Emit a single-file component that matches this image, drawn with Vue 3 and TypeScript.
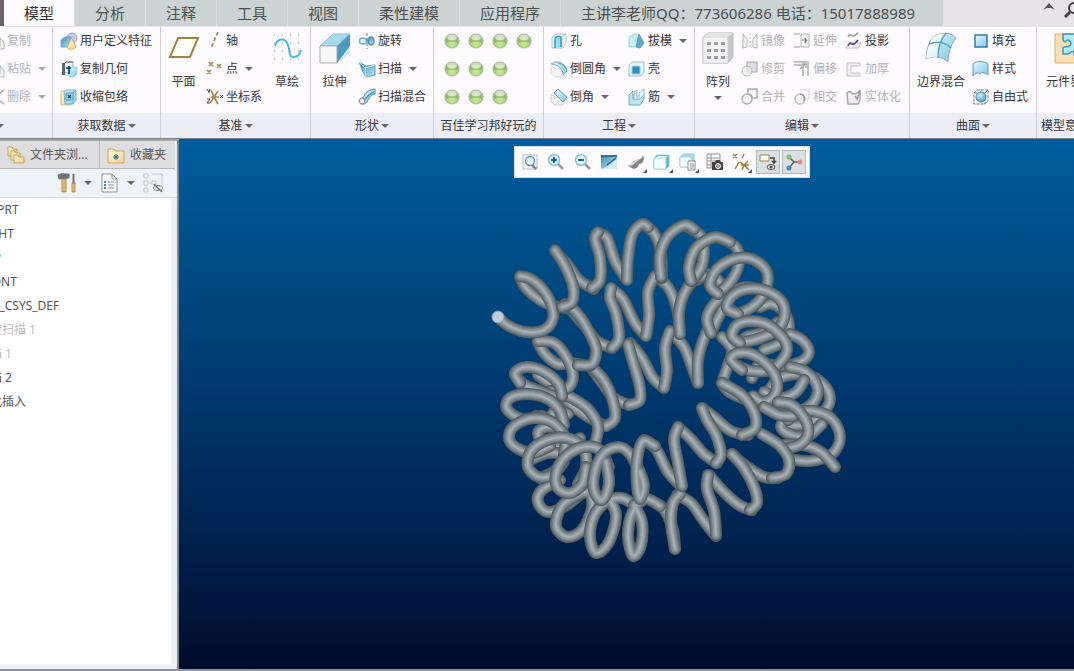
<script setup lang="ts">
interface Tool {
  icon: string
  label: string
  arrow?: boolean
  off?: boolean
}
interface Block {
  big?: Tool
  rows?: Tool[]
  lamps?: number[]
}
interface Group {
  id: string
  title: string
  arrow: boolean
  blocks: Block[]
}
type Point = [number, number]

const tabs: string[] = ['模型', '分析', '注释', '工具', '视图', '柔性建模', '应用程序', '主讲李老师QQ：773606286 电话：15017888989']

const groups: Group[] = [
  { id: 'ops', title: '操作', arrow: true, blocks: [{ rows: [
    { icon: 'copy', label: '复制', off: true },
    { icon: 'copy', label: '粘贴', off: true, arrow: true },
    { icon: 'del', label: '删除', off: true, arrow: true }] }] },
  { id: 'data', title: '获取数据', arrow: true, blocks: [{ rows: [
    { icon: 'udf', label: '用户定义特征' },
    { icon: 'copygeom', label: '复制几何' },
    { icon: 'shrink', label: '收缩包络' }] }] },
  { id: 'datum', title: '基准', arrow: true, blocks: [
    { big: { icon: 'plane', label: '平面' } },
    { rows: [
      { icon: 'axis', label: '轴' },
      { icon: 'point', label: '点', arrow: true },
      { icon: 'csys', label: '坐标系' }] },
    { big: { icon: 'sketch', label: '草绘' } }] },
  { id: 'shape', title: '形状', arrow: true, blocks: [
    { big: { icon: 'extrude', label: '拉伸' } },
    { rows: [
      { icon: 'revolve', label: '旋转' },
      { icon: 'sweep', label: '扫描', arrow: true },
      { icon: 'blend', label: '扫描混合' }] }] },
  { id: 'fun', title: '百佳学习邦好玩的', arrow: false, blocks: [{ lamps: [4, 3, 3] }] },
  { id: 'eng', title: '工程', arrow: true, blocks: [
    { rows: [
      { icon: 'hole', label: '孔' },
      { icon: 'round', label: '倒圆角', arrow: true },
      { icon: 'chamfer', label: '倒角', arrow: true }] },
    { rows: [
      { icon: 'draft', label: '拔模', arrow: true },
      { icon: 'shell', label: '壳' },
      { icon: 'rib', label: '筋', arrow: true }] }] },
  { id: 'edit', title: '编辑', arrow: true, blocks: [
    { big: { icon: 'pattern', label: '阵列', arrow: true } },
    { rows: [
      { icon: 'mirror', label: '镜像', off: true },
      { icon: 'trim', label: '修剪', off: true },
      { icon: 'merge', label: '合并', off: true }] },
    { rows: [
      { icon: 'extend', label: '延伸', off: true },
      { icon: 'offset', label: '偏移', off: true },
      { icon: 'intersect', label: '相交', off: true }] },
    { rows: [
      { icon: 'project', label: '投影' },
      { icon: 'thicken', label: '加厚', off: true },
      { icon: 'solidify', label: '实体化', off: true }] }] },
  { id: 'surf', title: '曲面', arrow: true, blocks: [
    { big: { icon: 'boundary', label: '边界混合' } },
    { rows: [
      { icon: 'fill', label: '填充' },
      { icon: 'style', label: '样式' },
      { icon: 'freestyle', label: '自由式' }] }] },
  { id: 'intent', title: '模型意图', arrow: true, blocks: [{ big: { icon: 'component', label: '元件界面' } }] },
]

const viewTools = [
  { icon: 'v-fit', name: '重新调整' },
  { icon: 'v-in', name: '放大' },
  { icon: 'v-out', name: '缩小' },
  { icon: 'v-repaint', name: '重画' },
  { icon: 'v-shade', name: '渲染', menu: true },
  { icon: 'v-display', name: '显示样式', menu: true },
  { icon: 'v-saved', name: '已保存方向', menu: true },
  { icon: 'v-manager', name: '视图管理器' },
  { icon: 'v-datum', name: '基准显示', menu: true },
  { icon: 'v-note', name: '注释显示', on: true },
  { icon: 'v-spin', name: '旋转中心', on: true },
]

const tree = [
  { label: 'PRT001.PRT', kind: 'root' },
  { label: 'RIGHT', kind: 'node' },
  { label: 'TOP', kind: 'node' },
  { label: 'FRONT', kind: 'node' },
  { label: 'PRT_CSYS_DEF', kind: 'node' },
  { label: '螺旋扫描 1', kind: 'off' },
  { label: '扫描 1', kind: 'off' },
  { label: '扫描 2', kind: 'node' },
  { label: '在此插入', kind: 'node' },
]

// Centre lines of the spring tube, listed from the farthest to the nearest.
const tube: Point[][] = [
  // far side of the right-hand turns
  [[760, 307], [772, 304], [784, 312], [789, 328], [782, 342], [764, 350]],
  [[752, 378], [760, 364], [780, 366], [800, 362], [809, 352], [802, 340], [790, 334]],
  [[768, 392], [780, 378], [804, 374], [822, 383], [830, 398], [824, 412], [808, 424], [790, 426]],
  [[790, 367], [806, 372], [817, 386], [815, 400], [802, 410], [784, 414], [766, 406]],
  [[764, 392], [780, 398], [796, 392], [804, 380]],
  [[787, 415], [781, 427], [792, 435], [808, 436], [822, 424]],
  [[788, 420], [796, 413], [813, 411], [832, 419], [840, 437], [832, 454], [810, 461], [789, 459]],
  [[782, 445], [803, 445], [821, 452], [835, 467]],
  [[740, 342], [748, 336], [762, 333], [778, 322]],
  [[722, 337], [732, 350], [727, 368], [723, 384], [734, 394]],
  // innermost row
  [[538, 375], [560, 392], [570, 404], [590, 418], [606, 426]],
  [[590, 366], [603, 384], [614, 398], [629, 405]],
  [[630, 343], [642, 358], [653, 378], [664, 388]],
  [[670, 331], [684, 347], [693, 370], [698, 383]],
  [[560, 428], [546, 427], [538, 433], [544, 443], [560, 447], [580, 438]],
  [[606, 426], [615, 418], [612, 398], [603, 379], [590, 366]],
  [[629, 405], [640, 400], [639, 383], [633, 362], [628, 344]],
  [[664, 388], [667, 370], [665, 348], [670, 331]],
  [[698, 383], [698, 360], [704, 338], [712, 322], [724, 309]],
  [[594, 447], [598, 427], [589, 410], [574, 399], [560, 394]],
  // middle row
  [[538, 342], [545, 354], [558, 364], [571, 363], [590, 366]],
  [[572, 311], [585, 326], [597, 341], [612, 348]],
  [[612, 289], [623, 299], [635, 323], [646, 336]],
  [[655, 276], [668, 287], [677, 309], [680, 334]],
  [[697, 280], [710, 274], [722, 286], [724, 304], [716, 322], [711, 333]],
  [[550, 391], [566, 389], [573, 377], [567, 358], [554, 343], [538, 341]],
  [[578, 365], [592, 364], [596, 349], [587, 328], [576, 312], [565, 304]],
  [[612, 348], [619, 338], [616, 314], [610, 298], [611, 288]],
  [[646, 336], [649, 316], [648, 292], [655, 276]],
  [[680, 334], [679, 312], [684, 294], [694, 280], [704, 276]],
  [[711, 333], [707, 318], [715, 303], [730, 292], [748, 287], [764, 292]],
  // outer row, running over the top
  [[520, 277], [526, 288], [540, 300], [554, 306], [565, 308]],
  [[555, 251], [567, 264], [579, 280], [594, 289]],
  [[597, 233], [607, 238], [615, 261], [627, 280]],
  [[642, 224], [654, 233], [661, 253], [662, 278]],
  [[686, 226], [701, 236], [704, 254], [700, 270], [691, 281]],
  [[720, 238], [736, 247], [739, 264], [731, 281], [718, 294]],
  [[498, 317], [509, 326], [526, 332], [544, 330], [553, 318], [550, 301], [540, 286], [529, 278], [520, 276]],
  [[562, 307], [572, 302], [573, 286], [565, 266], [555, 250]],
  [[592, 288], [600, 280], [600, 258], [595, 239], [598, 232]],
  [[627, 280], [628, 258], [632, 235], [642, 224], [648, 227]],
  [[661, 277], [660, 255], [668, 236], [684, 225], [694, 229]],
  [[691, 281], [689, 266], [697, 247], [715, 237], [730, 242]],
  [[718, 294], [710, 285], [717, 269], [734, 259], [752, 259], [766, 270], [767, 285], [758, 302], [740, 313], [730, 309]],
  [[738, 314], [727, 308], [732, 296], [747, 289], [767, 291], [782, 302], [784, 318], [774, 332], [750, 341], [738, 341]],
  [[740, 343], [732, 336], [737, 325], [752, 321], [770, 326], [785, 341], [786, 354], [772, 369], [752, 371], [736, 365]],
  [[722, 383], [728, 391], [742, 398], [758, 402]],
  [[742, 370], [731, 360], [738, 353], [754, 355], [770, 368], [777, 382], [774, 396], [763, 402], [753, 396]],
  // lower right sweep
  [[764, 407], [779, 415], [793, 416]],
  [[702, 408], [714, 417], [731, 431], [748, 435]],
  [[678, 427], [690, 438], [704, 454], [717, 463]],
  [[644, 440], [656, 449], [668, 472], [681, 486]],
  [[732, 454], [746, 466], [764, 477], [778, 478]],
  [[709, 475], [723, 491], [739, 505], [752, 510]],
  [[677, 495], [691, 503], [704, 521], [716, 536]],
  [[650, 500], [664, 509], [673, 530], [675, 549]],
  [[778, 402], [792, 405], [805, 419], [808, 434], [799, 445], [784, 449]],
  [[772, 478], [786, 474], [789, 460], [779, 445], [762, 434]],
  [[750, 510], [757, 503], [754, 487], [744, 468], [732, 454]],
  [[716, 535], [714, 511], [707, 489], [708, 475]],
  [[675, 549], [671, 523], [673, 503], [680, 494]],
  [[742, 435], [755, 428], [754, 412], [742, 395], [722, 383]],
  [[716, 463], [721, 454], [716, 435], [707, 420], [702, 408]],
  [[682, 486], [678, 463], [674, 440], [678, 427]],
  // lower left turns
  [[560, 480], [542, 490], [538, 502], [548, 512], [567, 505], [586, 489]],
  [[590, 490], [592, 508], [582, 530], [567, 537], [556, 526], [562, 506], [580, 494], [594, 491]],
  [[610, 500], [616, 516], [609, 542], [596, 553], [590, 536], [595, 514], [608, 501], [622, 498], [634, 505]],
  [[634, 505], [642, 522], [641, 545], [633, 556], [628, 535], [633, 511], [646, 499], [660, 506]],
  [[530, 460], [548, 453], [564, 456], [556, 470], [540, 478]],
  [[515, 374], [523, 384], [540, 391], [556, 397]],
  [[568, 414], [556, 410], [550, 417], [536, 416]],
  [[562, 396], [558, 383], [543, 371], [526, 367], [515, 373], [520, 383]],
  [[542, 416], [522, 419], [507, 409], [510, 398], [528, 394], [548, 399], [560, 411], [564, 425]],
  [[550, 446], [532, 453], [514, 446], [509, 435], [517, 424], [534, 418], [552, 422], [565, 437], [564, 455]],
  [[564, 461], [554, 474], [539, 477], [528, 467], [531, 451], [547, 440], [567, 438], [583, 448], [586, 467], [578, 484]],
  [[586, 467], [582, 484], [570, 493], [558, 488], [556, 474], [565, 457], [583, 447], [600, 450], [609, 467]],
  [[606, 462], [609, 484], [602, 500], [594, 490], [595, 471], [604, 453], [619, 447], [630, 454], [640, 472]],
  [[640, 472], [644, 486], [640, 499], [637, 485], [637, 460], [643, 441], [655, 446]],
]

// Smooth curve through the points (Catmull-Rom turned into cubic Béziers).
function curve(points: Point[]): string {
  let d = `M${points[0][0]} ${points[0][1]}`
  for (let i = 0; i < points.length - 1; i++) {
    const a = points[Math.max(i - 1, 0)]
    const b = points[i]
    const c = points[i + 1]
    const e = points[Math.min(i + 2, points.length - 1)]
    const c1 = [b[0] + (c[0] - a[0]) / 6, b[1] + (c[1] - a[1]) / 6]
    const c2 = [c[0] - (e[0] - b[0]) / 6, c[1] - (e[1] - b[1]) / 6]
    d += `C${c1[0].toFixed(1)} ${c1[1].toFixed(1)} ${c2[0].toFixed(1)} ${c2[1].toFixed(1)} ${c[0]} ${c[1]}`
  }
  return d
}
const coils: string[] = tube.map(curve)

// Tube shading from the rim to the highlight: stroke width and colour.
const shades: [number, string][] = [
  [12, '#4c565b'],
  [11, '#5c676c'],
  [9, '#6d787d'],
  [7, '#7e898f'],
  [5, '#8c969c'],
  [3, '#9aa4a9'],
  [1, '#adb5b9'],
]
</script>

<template>
  <div class="app">
    <svg class="defs" width="0" height="0" aria-hidden="true">
      <defs>
        <linearGradient id="cy" x1="0" y1="0" x2="1" y2="1"><stop offset="0" stop-color="#e6f8fd" /><stop offset="1" stop-color="#7cc9e4" /></linearGradient>
        <linearGradient id="bl" x1="0" y1="0" x2="1" y2="1"><stop offset="0" stop-color="#3d8db8" /><stop offset="1" stop-color="#b9e4f4" /></linearGradient>
        <linearGradient id="tan" x1="0" y1="0" x2="1" y2="1"><stop offset="0" stop-color="#fff6da" /><stop offset="1" stop-color="#f0d397" /></linearGradient>
        <radialGradient id="lampfill" cx=".5" cy=".72" r=".6"><stop offset="0" stop-color="#d3f0a0" /><stop offset=".6" stop-color="#a5d07a" /><stop offset="1" stop-color="#80aa60" /></radialGradient>
        <radialGradient id="ball" cx=".4" cy=".3" r=".7"><stop offset="0" stop-color="#dff6ff" /><stop offset="1" stop-color="#3d9fcb" /></radialGradient>
      </defs>
      <symbol id="copy" viewBox="0 0 18 18"><path d="M2 2h8l3 3v9H2zM8 7h6l3 3v7H8z" fill="#f3f3f3" stroke="#b4b4b4" /></symbol>
      <symbol id="del" viewBox="0 0 18 18"><path d="M17 2C12 5 11 8 10 9s3 4 7 7" fill="none" stroke="#b0b0b0" stroke-width="1.5" /></symbol>
      <symbol id="udf" viewBox="0 0 18 18"><circle cx="12" cy="6" r="5" fill="#c3c9ea" stroke="#9fa6cf" /><path d="M1 8l4-3h6v7l-3 3H1z" fill="url(#bl)" stroke="#6caac6" /><path d="M11.500 6l4.500 9c-1 3-8 3-9 0z" fill="url(#tan)" stroke="#d0ab62" /></symbol>
      <symbol id="copygeom" viewBox="0 0 18 18"><path d="M3 5l3-3h7v8l-3 3H3z" fill="#f1f4f6" stroke="#9aa3a9" /><path d="M2 3h3v12H2z" fill="#5b666d" /><path d="M3 5l3-3h7" fill="none" stroke="#59656c" /><path d="M9 9l2-2h6v7l-3 3H9z" fill="url(#cy)" stroke="#9bd3e6" /><path d="M6 8h5M9 6v8" stroke="#1d5e80" stroke-width="2" fill="none" /></symbol>
      <symbol id="shrink" viewBox="0 0 18 18"><path d="M1 3h10v14H1z" fill="url(#tan)" stroke="#d9b76f" /><path d="M4 4l3-2h9v10l-3 4H5z" fill="url(#cy)" stroke="#6fb3cc" /><path d="M6 5h7v7H6zM13 5l3-3" fill="#a5dcec" stroke="#4794b3" /><path d="M8 7l3 3m0-3l-3 3" stroke="#174c68" stroke-width="1.500" /></symbol>
      <symbol id="axis" viewBox="0 0 18 18"><path d="M12 0L5 16" stroke="#a8894f" stroke-width="1.800" stroke-dasharray="4 2" /></symbol>
      <symbol id="point" viewBox="0 0 18 18"><path d="M3 2l4 4m0-4L3 6M11 4l4 4m0-4l-4 4M1 10l4 4m0-4l-4 4" stroke="#a8894f" stroke-width="1.700" /></symbol>
      <symbol id="csys" viewBox="0 0 18 18"><path d="M5 2l3 7-4 6M12 3L8 9l4 7M5 9h8" stroke="#a8894f" stroke-width="1.700" fill="none" /><path d="M1 1l2 3 1-3M3 3v2M1 11h3l-3 4h3M14 7l3 3m0-3l-3 3" stroke="#444" fill="none" /></symbol>
      <symbol id="plane" viewBox="0 0 32 32"><path d="M10 6h20l-8 19H2z" fill="#fffdf8" stroke="#9f8146" stroke-width="2" /></symbol>
      <symbol id="sketch" viewBox="0 0 32 32"><path d="M3 3h28M3 11h28M3 19h28M3 27h28" stroke="#8d8d9b" stroke-dasharray="1 7" /><path d="M4 14C6 7 14 4 17 13s0 12 6 12c4 0 6-3 7-7" fill="none" stroke="#4cb6e6" stroke-width="2" /></symbol>
      <symbol id="extrude" viewBox="0 0 32 32"><path d="M1 14L14 2h17L18 14z" fill="#a5d9eb" stroke="#8dc3d7" /><path d="M18 14L31 2v18L18 31z" fill="#4f9abb" /><path d="M18 31L31 14v6z" fill="#c8eff8" /><path d="M1 14h17v17H1z" fill="#f8f8f8" stroke="#a9aeb2" /></symbol>
      <symbol id="revolve" viewBox="0 0 18 18"><ellipse cx="5" cy="9" rx="3.500" ry="3" fill="#e3f6fb" stroke="#6aaec8" stroke-width="1.500" /><ellipse cx="13" cy="9" rx="3" ry="4" fill="url(#bl)" stroke="#4a92b1" stroke-width="1.500" /><path d="M9 1v16" stroke="#777" stroke-dasharray="3 2" /></symbol>
      <symbol id="sweep" viewBox="0 0 18 18"><path d="M1 2l7 4 9-1v10l-9 2-3-5z" fill="url(#bl)" stroke="#5fa2bf" /><path d="M1 2l6 6 1 9M7 8l10-3" fill="none" stroke="#d0edf6" /></symbol>
      <symbol id="blend" viewBox="0 0 18 18"><path d="M2 11c3-2 4-2 5-5 1-2 4-4 10-5v5c-5 1-5 3-7 6-1 3-3 4-5 4-3 1-5-3-3-5z" fill="url(#cy)" stroke="#568da3" /><path d="M6 12c4-2 3-6 10-8" fill="none" stroke="#4b98b7" stroke-width="1.500" /><ellipse cx="4" cy="13" rx="2.500" ry="3" fill="#fff" stroke="#888" /></symbol>
      <symbol id="hole" viewBox="0 0 18 18"><path d="M2 5l4-3h10v9l-3 5H2zM2 5h10v11M12 5l4-3" fill="#eef8fb" stroke="#b4c2c8" /><path d="M5 16V8c0-4 5-5 6-2v9" fill="#9adcf1" stroke="#3598bb" stroke-width="1.500" /></symbol>
      <symbol id="round" viewBox="0 0 18 18"><path d="M1 6l5 3h8v8H6l-5-3z" fill="#f2f2f2" stroke="#dcdcdc" /><path d="M1 4l4-2c6-1 11 3 12 9l-4 4c0-6-4-10-12-11z" fill="url(#cy)" stroke="#84afc0" /><path d="M8 3c5 1 8 4 9 8l-3 3" fill="none" stroke="#5ba6c4" /></symbol>
      <symbol id="chamfer" viewBox="0 0 18 18"><path d="M1 6l4 3h8v8H5l-4-3z" fill="#f5f5f5" stroke="#ccc" /><path d="M4 5l4-4 9 8-4 5z" fill="url(#cy)" stroke="#5b9bb3" /></symbol>
      <symbol id="draft" viewBox="0 0 18 18"><path d="M1 5l6-3h4L8 15H1z" fill="#c5ebf4" stroke="#a3cfde" /><path d="M8 15l3-13 5 9-4 5z" fill="#5da9c8" stroke="#5d9fb9" /></symbol>
      <symbol id="shell" viewBox="0 0 18 18"><path d="M1 5l3-3h12v10l-3 4H1z" fill="#e3f3f8" stroke="#a5b4bb" /><path d="M4 6h8v8H4z" fill="#348fb6" stroke="#9cd6e8" /></symbol>
      <symbol id="rib" viewBox="0 0 18 18"><path d="M1 7l4-4v8h7l4-6v6l-4 6H1z" fill="#b9e6f2" stroke="#6da9bf" /><path d="M6 10V4l3-2v8M11 11V5l5-4v5" fill="#e0f7fb" stroke="#8bbfd0" /></symbol>
      <symbol id="pattern" viewBox="0 0 32 32"><path d="M1 5l5-4h25v24l-5 6H1z" fill="#c6c6c6" stroke="#bbb" /><path d="M1 5h25v26H1z" fill="#f3f3f3" stroke="#cfcfcf" /><path d="M1 5l5-4h25l-5 4z" fill="#e4e4e4" /><g fill="#9d9ea3"><path d="M5 10h4v3H5zM12 10h4v3h-4zM19 10h4v3h-4zM5 17h4v3H5zM12 17h4v3h-4zM19 17h4v3h-4zM5 24h4v3H5zM12 24h4v3h-4zM19 24h4v3h-4z" /></g></symbol>
      <symbol id="mirror" viewBox="0 0 18 18"><path d="M2 2l4 5v8l-4 1zM16 2l-4 5v8l4 1z" fill="#f2f2f2" stroke="#b7b7b7" /><path d="M9 1v16" stroke="#b7b7b7" stroke-dasharray="2 2" /></symbol>
      <symbol id="trim" viewBox="0 0 18 18"><path d="M6 2h10v10H6z" fill="#dedede" stroke="#a6a6a6" /><circle cx="6" cy="11" r="5" fill="#eee" fill-opacity=".6" stroke="#b5b5b5" /></symbol>
      <symbol id="merge" viewBox="0 0 18 18"><circle cx="6" cy="11" r="5" fill="#f7f7f7" stroke="#b0b0b0" stroke-width="1.500" /><path d="M7 1h9v9h-5c0-3-2-4-4-4z" fill="#f7f7f7" stroke="#ababab" stroke-width="1.500" /></symbol>
      <symbol id="extend" viewBox="0 0 18 18"><path d="M8 2h8v13H8z" fill="#f4f4f4" stroke="#b5b5b5" /><path d="M1 2h6M1 15h6" fill="none" stroke="#999" /><path d="M9 8h3M12 6l2 2.500-2 2.500z" fill="#888" stroke="#888" /></symbol>
      <symbol id="offset" viewBox="0 0 18 18"><path d="M1 5h9v11M1 2h14v14" fill="none" stroke="#c3c3c3" stroke-width="2" /><path d="M7 9l5-5M9 4h4v4" fill="none" stroke="#aaa" stroke-width="1.500" /></symbol>
      <symbol id="intersect" viewBox="0 0 18 18"><circle cx="7" cy="11" r="5" fill="#f2f2f2" stroke="#c2c2c2" stroke-width="1.500" /><path d="M7 2h9v9h-5" fill="none" stroke="#d0d0d0" /><path d="M7 6c4 0 5 4 4 7" fill="none" stroke="#999" stroke-width="1.500" /></symbol>
      <symbol id="project" viewBox="0 0 18 18"><path d="M3 5c2-5 4 0 6-1s2-2 4-3" fill="none" stroke="#999" stroke-width="1.500" /><path d="M1 16l4-5h11l-3 5z" fill="#fafafa" stroke="#bbb" /><path d="M3 14c2-6 4 0 6-2s3-2 4-4" fill="none" stroke="#66498f" stroke-width="1.800" /></symbol>
      <symbol id="thicken" viewBox="0 0 18 18"><path d="M2 3h13v3H6v7h9v3H2z" fill="#efefef" stroke="#c2c2c2" /></symbol>
      <symbol id="solidify" viewBox="0 0 18 18"><path d="M2 5c4-4 5 2 7 1s4 0 6-4v10l-2 4H3z" fill="#eee" stroke="#a6a6a6" stroke-width="1.500" /><path d="M10 8l2 3 3-8" fill="none" stroke="#999" stroke-width="1.500" /></symbol>
      <symbol id="boundary" viewBox="0 0 32 32"><path d="M1 27C2 13 6 4 14 2c7-1 14-1 17 4-5 7-8 14-8 24-5-5-14-7-22-3z" fill="url(#cy)" stroke="#97a3a8" /><path d="M14 2C8 4 3 9 1 27c5-2 8-2 12-1C13 16 16 8 21 1z" fill="#fff" fill-opacity=".7" /><path d="M4 12c8-3 16-2 22 4M21 1c-6 7-8 15-8 25" fill="none" stroke="#5ba2bf" stroke-width="1.500" /></symbol>
      <symbol id="fill" viewBox="0 0 18 18"><path d="M3 3h12v12H3z" fill="url(#cy)" stroke="#347b9e" stroke-width="1.500" /></symbol>
      <symbol id="style" viewBox="0 0 18 18"><path d="M1 4c5-4 11-3 15 0v11c-4-3-7-3-8-1-2-2-4-1-7 2z" fill="url(#cy)" stroke="#6799ae" /></symbol>
      <symbol id="freestyle" viewBox="0 0 18 18"><path d="M2 5l3-3h11v11l-3 3H2zM2 5h11v11M13 5l3-3" fill="none" stroke="#777" stroke-dasharray="3 1" /><circle cx="9" cy="9" r="5" fill="url(#ball)" stroke="#4c8baa" /></symbol>
      <symbol id="component" viewBox="0 0 32 32"><path d="M1 2h30v29H1z" fill="#f9dfb2" stroke="#d9b274" /><path d="M9 2h22v21H20v-3c-2-2-5 3-8 2H9v-6c0-2 8 0 8-4s-4-5-5-3-3 0-3-2z" fill="#b4eaf6" stroke="#3d96b8" stroke-width="1.500" /></symbol>
      <symbol id="lamp" viewBox="0 0 18 18"><circle cx="9" cy="9" r="7" fill="url(#lampfill)" stroke="#a9b5a1" /><ellipse cx="9" cy="5.500" rx="5" ry="3" fill="#fff" fill-opacity=".6" /><path d="M3 9h12" stroke="#6c8f4e" stroke-opacity=".45" /></symbol>
      <symbol id="v-fit" viewBox="0 0 18 18"><path d="M2 2h14v14H2z" fill="none" stroke="#b3b9be" /><path d="M11 12l4 4" stroke="#888" stroke-width="2.500" /><circle cx="9" cy="8" r="4.500" fill="#dff4fd" stroke="#5da0bf" stroke-width="1.500" /></symbol>
      <symbol id="v-in" viewBox="0 0 18 18"><path d="M10 10l6 6" stroke="#999" stroke-width="2.500" /><circle cx="7" cy="7" r="5.500" fill="#e3f6fd" stroke="#8fbfd6" stroke-width="1.500" /><path d="M4 7h6M7 4v6" stroke="#126b9c" stroke-width="2" /></symbol>
      <symbol id="v-out" viewBox="0 0 18 18"><path d="M10 10l6 6" stroke="#999" stroke-width="2.500" /><circle cx="7" cy="7" r="5.500" fill="#e3f6fd" stroke="#8fbfd6" stroke-width="1.500" /><path d="M4 7h6" stroke="#126b9c" stroke-width="2" /></symbol>
      <symbol id="v-repaint" viewBox="0 0 18 18"><path d="M1 2h16v14H1z" fill="url(#bl)" /><path d="M1 2h16v2H1z" fill="#306f93" /><path d="M1 16l5-2L17 6v10z" fill="#d3eef7" /><path d="M7 12l9-7" stroke="#24638a" stroke-width="1.500" /></symbol>
      <symbol id="v-shade" viewBox="0 0 18 18"><path d="M1 12c4 1 4-3 6-4s7 0 9-6c2 5 0 9-4 9-1 5-6 7-11 1z" fill="#858585" /><path d="M3 12c4 0 5-5 9-6" stroke="#ddd" stroke-width="2" fill="none" /></symbol>
      <symbol id="v-display" viewBox="0 0 18 18"><path d="M1 5l3-3h12v11l-3 3H1z" fill="#5aabce" stroke="#8cc9e0" /><path d="M1 5h12v11H1z" fill="#f3fcfe" stroke="#a3d6e7" /><path d="M2 5l3-2h10l-2 2z" fill="#d5f1f9" /></symbol>
      <symbol id="v-saved" viewBox="0 0 18 18"><path d="M1 4l3-3h11v9l-3 4H1z" fill="#a6ddec" stroke="#93cade" /><path d="M1 4h11v10H1z" fill="#f5fcfe" stroke="#acd6e3" /><path d="M9 8h7v9H9z" fill="#fff" stroke="#888" /><path d="M11 11h4m-4 2h4m-4 2h4" stroke="#888" /></symbol>
      <symbol id="v-manager" viewBox="0 0 18 18"><path d="M1 1h13v14H1zM1 5h13M1 8h13M1 12h13M5 1v14" fill="#f6f6f6" stroke="#999" /><path d="M6 9h3l1-2h4l1 2h2v8H6z" fill="#444" /><circle cx="12" cy="13" r="2.500" fill="#999" stroke="#fff" /></symbol>
      <symbol id="v-datum" viewBox="0 0 18 18"><path d="M1 1l4 4m0-4L1 5M12 1l-2 4M7 9l-4 7M8 9l4 3 4-4M12 12l-2 5m2-5l5 5m-8-5h8" fill="none" stroke="#9b8145" stroke-width="1.500" /></symbol>
      <symbol id="v-note" viewBox="0 0 18 18"><path d="M1 2h9v6H1z" fill="#fffbef" stroke="#9f8a54" /><path d="M11 5h4v5m-2-2l2 2 2-2" fill="none" stroke="#444" stroke-width="1.500" /><ellipse cx="12" cy="14" rx="4" ry="2.500" fill="#eee" stroke="#555" /><circle cx="12" cy="14" r="1.500" fill="#444" /></symbol>
      <symbol id="v-spin" viewBox="0 0 18 18"><path d="M4 4l5 5-5 6M9 9h5" fill="none" stroke="#665e55" stroke-width="1.500" /><circle cx="4" cy="4" r="2.500" fill="#81b879" /><circle cx="4" cy="15" r="2.500" fill="#438eb4" /><circle cx="15" cy="9" r="2.500" fill="#e58c81" /></symbol>
      <symbol id="folders" viewBox="0 0 18 18"><g fill="url(#tan)" stroke="#c89d4e"><path d="M1 1h4l1 2h4v7H1z" /><path d="M4 5h4l1 2h4v7H4z" /><path d="M7 9h4l1 2h5v6H7z" /></g></symbol>
      <symbol id="fav" viewBox="0 0 18 18"><path d="M1 3h6l1 2h9v12H1z" fill="url(#tan)" stroke="#cfa65a" /><path d="M6 11h6M9 8v6M7 9l4 4m0-4l-4 4" stroke="#266b86" /></symbol>
      <symbol id="hammer" viewBox="0 0 20 20"><path d="M5 6h4v13H5zM15 10h3v9h-3z" fill="#e2b970" stroke="#b98d48" /><path d="M1 2c3-2 7-1 11-1v4L2 6zM16 1h1v9h-1z" fill="#6d7377" stroke="#6d7377" /></symbol>
      <symbol id="sheet" viewBox="0 0 20 20"><path d="M2 1h10l5 5v13H2z" fill="#f9fcfe" stroke="#8a9299" /><path d="M12 1v5h5M8 9h6M8 12h6M8 15h6" fill="none" stroke="#8a9299" /><path d="M4 9h2M4 12h2M4 15h2" stroke="#4d809d" stroke-width="2" /></symbol>
      <symbol id="hidetree" viewBox="0 0 20 20"><path d="M1 1h4v4H1zM1 8h4v4H1zM1 15h4v4H1zM9 8h4v4H9zM9 1h10v11M6 10h3" fill="none" stroke="#c6c6c6" /><ellipse cx="15" cy="15" rx="4.500" ry="2.500" fill="#eee" stroke="#888" /><path d="M11 11l8 8" stroke="#777" stroke-width="1.500" /></symbol>
    </svg>

    <header class="tabbar">
      <nav class="tabs">
        <button v-for="(tab, i) in tabs" :key="tab" type="button" class="tab" :class="{ active: i === 0 }">{{ tab }}</button>
      </nav>
      <div class="corner">
        <button type="button" class="plain" aria-label="最小化功能区"><svg width="12" height="8" viewBox="0 0 12 8"><path d="M0 8l6-7 6 7-4-2H4z" fill="#5b5357" /></svg></button>
        <button type="button" class="plain" aria-label="搜索"><svg width="18" height="18" viewBox="0 0 18 18"><circle cx="10" cy="6" r="5" fill="none" stroke="#443f42" stroke-width="2" /><path d="M6 10l-5 5" stroke="#443f42" stroke-width="3" /></svg></button>
      </div>
    </header>

    <div class="ribbon">
      <section v-for="g in groups" :key="g.id" class="group" :class="'g-' + g.id">
        <div class="body">
          <template v-for="(b, bi) in g.blocks" :key="bi">
            <button v-if="b.big" type="button" class="big">
              <svg class="ico-big"><use :href="'#' + b.big.icon" /></svg>
              <span>{{ b.big.label }}</span>
              <i v-if="b.big.arrow" class="arrow"></i>
            </button>
            <div v-else-if="b.rows" class="rows">
              <button v-for="t in b.rows" :key="t.label" type="button" class="small" :class="{ off: t.off }">
                <svg class="ico"><use :href="'#' + t.icon" /></svg>
                <span>{{ t.label }}</span>
                <i v-if="t.arrow" class="arrow"></i>
              </button>
            </div>
            <div v-else class="rows">
              <div v-for="(n, ri) in b.lamps" :key="ri" class="lamps">
                <button v-for="k in n" :key="k" type="button" class="plain" aria-label="宏"><svg class="ico"><use href="#lamp" /></svg></button>
              </div>
            </div>
          </template>
        </div>
        <div class="title"><span>{{ g.title }}</span><i v-if="g.arrow" class="arrow"></i></div>
      </section>
    </div>

    <main class="work">
      <aside class="side">
        <div class="side-tabs">
          <button type="button" class="side-tab wide"><svg class="ico"><use href="#folders" /></svg><span>文件夹浏...</span></button>
          <button type="button" class="side-tab"><svg class="ico"><use href="#fav" /></svg><span>收藏夹</span></button>
        </div>
        <div class="side-tools">
          <button type="button" class="plain tool" aria-label="设置"><svg class="ico-mid"><use href="#hammer" /></svg><i class="arrow"></i></button>
          <button type="button" class="plain tool" aria-label="显示"><svg class="ico-mid"><use href="#sheet" /></svg><i class="arrow"></i></button>
          <button type="button" class="plain tool" aria-label="隐藏"><svg class="ico-mid"><use href="#hidetree" /></svg></button>
        </div>
        <ul class="tree">
          <li v-for="n in tree" :key="n.label" :class="n.kind">{{ n.label }}</li>
        </ul>
      </aside>
      <section class="canvas">
        <svg class="model" viewBox="179 139 895 530" role="img" aria-label="弹簧模型">
          <g v-for="(d, i) in coils" :key="i" fill="none" stroke-linecap="round" stroke-linejoin="round">
            <path v-for="[w, c] in shades" :key="w" :d="d" :stroke="c" :stroke-width="w" />
          </g>
          <ellipse cx="498" cy="317" rx="6" ry="6" fill="#bfcbd6" stroke="#8f9ba3" />
        </svg>
        <div class="view-tools" role="toolbar">
          <button v-for="v in viewTools" :key="v.icon" type="button" class="view-tool" :class="{ on: v.on, menu: v.menu }" :aria-label="v.name">
            <svg class="ico"><use :href="'#' + v.icon" /></svg>
          </button>
        </div>
      </section>
    </main>
  </div>
</template>

<style>
html, body { margin: 0; overflow: hidden; }
</style>

<style scoped>
.app { min-height: 100vh; display: flex; flex-direction: column; overflow: hidden; box-sizing: border-box; background: #fdfbfe; color: #38383c; font: 12px/16px "Noto Sans", "Noto Sans CJK SC", sans-serif; }
.defs { position: absolute; }
button { margin: 0; padding: 0; border: 0; background: none; font: inherit; color: inherit; }
.plain { display: flex; align-items: center; }
.ico { width: 18px; height: 18px; flex: none; }
.ico-mid { width: 20px; height: 20px; flex: none; }
.ico-big { width: 32px; height: 32px; flex: none; }
.arrow { width: 0; height: 0; flex: none; border: 4px solid transparent; border-top: 4px solid #6a656b; border-bottom: 0; }

.tabbar { height: 26px; display: flex; background: #e7e4e8; }
.tabs { display: flex; border-left: 4px solid #6b6367; background: #cbd3d3; }
.tab { padding: 0 20px; border-right: 1px solid #d9dfdf; font-size: 15px; line-height: 24px; color: #4b4f50; white-space: nowrap; }
.tab:last-child { padding-right: 28px; border-right: 0; }
.tab.active { background: #fdfbfe; color: #333; }
.corner { flex: 1; display: flex; justify-content: flex-end; align-items: flex-start; gap: 9px; margin-right: -8px; padding-top: 2px; }

.ribbon { display: flex; height: 112px; border-top: 1px solid #e7e4e8; box-sizing: border-box; background: #fdfbfe; white-space: nowrap; }
.group { flex: none; display: flex; flex-direction: column; border-right: 1px solid #d0ced6; box-sizing: border-box; overflow: hidden; }
.body { flex: 1; display: grid; }
.rows { display: grid; grid-template-rows: repeat(3, 28px); }
.small { display: flex; align-items: center; gap: 2px; text-align: left; }
.small .arrow { margin-left: 5px; }
.off { color: #b5b3b8; }
.off .arrow { border-top-color: #aaa7ad; }
.big { display: flex; flex-direction: column; align-items: center; padding-top: 5px; }
.big span { margin-top: 10px; }
.big .arrow { margin-top: 6px; }
.title { height: 25px; display: flex; align-items: center; justify-content: center; gap: 2px; background: #ecedf6; }
.g-ops { width: 132px; margin-left: -79px; }
.g-ops .body { padding-left: 66px; }
.g-data { width: 108px; }
.g-data .body { padding-left: 7px; }
.g-datum { width: 150px; }
.g-datum .body { grid-template-columns: 45px 62px 38px; }
.g-shape { width: 123px; }
.g-shape .body { grid-template-columns: 47px 1fr; }
.g-fun { width: 110px; }
.g-fun .body { padding-left: 9px; }
.lamps { display: flex; align-items: center; gap: 6px; }
.g-eng { width: 151px; }
.g-eng .body { grid-template-columns: 78px 1fr; padding-left: 6px; }
.g-edit { width: 215px; }
.g-edit .body { grid-template-columns: 46px 52px 52px 1fr; }
.g-surf { width: 127px; }
.g-surf .body { grid-template-columns: 62px 1fr; }
.g-intent { flex: 1 1 0; min-width: 0; border-right: 0; }
.g-intent .body { grid-template-columns: 66px; }
.g-intent .title { justify-content: flex-start; padding-left: 4px; }

.work { flex: 1; display: flex; border-top: 1px solid #77818c; border-bottom: 2px solid #8f9498; }
.side { width: 179px; flex: none; display: flex; flex-direction: column; box-sizing: border-box; padding-bottom: 5px; border-top: 2px solid #a6a5a9; border-right: 2px solid #7c8792; background: #edf1f5; color: #55565a; }
.side-tabs { display: flex; gap: 1px; height: 28px; margin-right: 2px; background: #b7b8ba; }
.side-tab { flex: 1; display: flex; align-items: center; gap: 5px; padding-left: 7px; margin-bottom: 1px; background: #dedee0; white-space: nowrap; }
.side-tab.wide { flex: 0 0 99px; }
.side-tools { display: flex; align-items: center; gap: 8px; height: 28px; padding-left: 57px; border-bottom: 1px solid #d4d9de; background: #eef3f8; }
.tool { gap: 7px; }
.tree { flex: 1; margin: 0 6px 0 0; padding: 0; overflow: hidden; list-style: none; background: #fff; }
.tree li { height: 24px; line-height: 24px; margin-left: -22px; white-space: nowrap; }
.tree .root { margin-left: -48px; }
.tree .off { color: #b9b9bc; }

.canvas { position: relative; flex: 1; background: linear-gradient(#005d9f 0%, #00508a 18%, #003f75 40%, #002d5d 62%, #001c46 82%, #000c2a 100%); }
.model { position: absolute; inset: 0; width: 100%; height: 100%; }
.view-tools { position: absolute; left: 335px; top: 7px; min-width: 288px; display: flex; justify-content: space-between; padding: 3px; border: 1px solid #d4dde5; background: #fdfbfe; }
.view-tool { position: relative; width: 24px; height: 24px; display: flex; align-items: center; justify-content: center; box-sizing: border-box; border: 1px solid transparent; }
.view-tool.on { border-color: #aeb8bd; background: #d9dfe2; }
.view-tool.menu::after { content: ""; position: absolute; right: 0; bottom: 0; border: 2px solid #555; border-top-color: transparent; border-left-color: transparent; }
</style>
